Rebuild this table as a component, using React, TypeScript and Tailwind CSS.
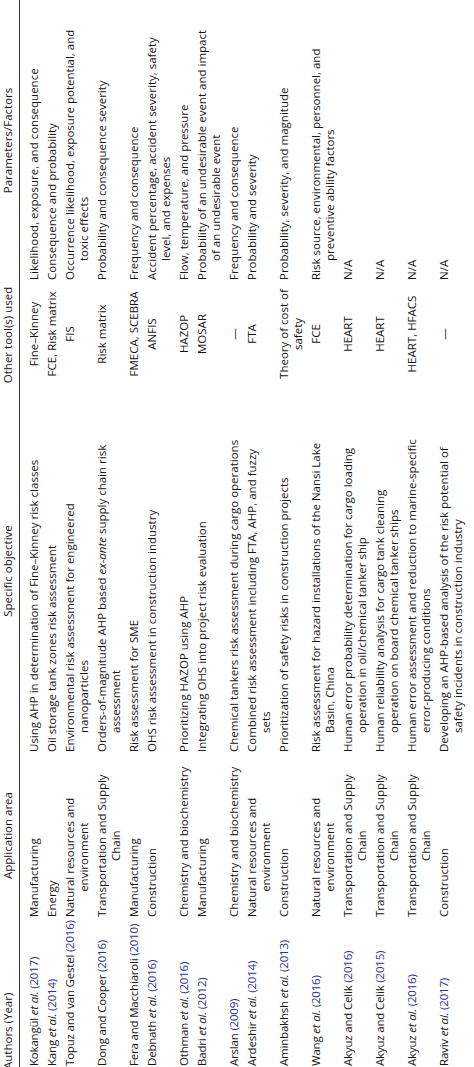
import type { ReactNode } from 'react';

const Yr = ({ y }: { y: string }) => <span className="text-[#28358f]">({y})</span>;
const Al = () => <i>et al.</i>;

type Row = {
  author: ReactNode;
  app: string[];
  obj: ReactNode[];
  tool: string[];
  par: string[];
};

const rows: Row[] = [
  { author: <>Kokangül <Al /> <Yr y="2017" /></>, app: ['Manufacturing'], obj: ['Using AHP in determination of Fine–Kinney risk classes'], tool: ['Fine–Kinney'], par: ['Likelihood, exposure, and consequence'] },
  { author: <>Kang <Al /> <Yr y="2014" /></>, app: ['Energy'], obj: ['Oil storage tank zones risk assessment'], tool: ['FCE, Risk matrix'], par: ['Consequence and probability'] },
  { author: <>Topuz and van Gestel <Yr y="2016" /></>, app: ['Natural resources and', 'environment'], obj: ['Environmental risk assessment for engineered', 'nanoparticles'], tool: ['FIS'], par: ['Occurrence likelihood, exposure potential, and', 'toxic effects'] },
  { author: <>Dong and Cooper <Yr y="2016" /></>, app: ['Transportation and Supply', 'Chain'], obj: [<>Orders-of-magnitude AHP based <i>ex-ante</i> supply chain risk</>, 'assessment'], tool: ['Risk matrix'], par: ['Probability and consequence severity'] },
  { author: <>Fera and Macchiaroli <Yr y="2010" /></>, app: ['Manufacturing'], obj: ['Risk assessment for SME'], tool: ['FMECA, SCEBRA'], par: ['Frequency and consequence'] },
  { author: <>Debnath <Al /> <Yr y="2016" /></>, app: ['Construction'], obj: ['OHS risk assessment in construction industry'], tool: ['ANFIS'], par: ['Accident percentage, accident severity, safety', 'level, and expenses'] },
  { author: <>Othman <Al /> <Yr y="2016" /></>, app: ['Chemistry and biochemistry'], obj: ['Prioritizing HAZOP using AHP'], tool: ['HAZOP'], par: ['Flow, temperature, and pressure'] },
  { author: <>Badri <Al /> <Yr y="2012" /></>, app: ['Manufacturing'], obj: ['Integrating OHS into project risk evaluation'], tool: ['MOSAR'], par: ['Probability of an undesirable event and impact', 'of an undesirable event'] },
  { author: <>Arslan <Yr y="2009" /></>, app: ['Chemistry and biochemistry'], obj: ['Chemical tankers risk assessment during cargo operations'], tool: ['—'], par: ['Frequency and consequence'] },
  { author: <>Ardeshir <Al /> <Yr y="2014" /></>, app: ['Natural resources and', 'environment'], obj: ['Combined risk assessment including FTA, AHP, and fuzzy', 'sets'], tool: ['FTA'], par: ['Probability and severity'] },
  { author: <>Aminbakhsh <Al /> <Yr y="2013" /></>, app: ['Construction'], obj: ['Prioritization of safety risks in construction projects'], tool: ['Theory of cost of', 'safety'], par: ['Probability, severity, and magnitude'] },
  { author: <>Wang <Al /> <Yr y="2016" /></>, app: ['Natural resources and', 'environment'], obj: ['Risk assessment for hazard installations of the Nansi Lake', 'Basin, China'], tool: ['FCE'], par: ['Risk source, environmental, personnel, and', 'preventive ability factors'] },
  { author: <>Akyuz and Celik <Yr y="2016" /></>, app: ['Transportation and Supply', 'Chain'], obj: ['Human error probability determination for cargo loading', 'operation in oil/chemical tanker ship'], tool: ['HEART'], par: ['N/A'] },
  { author: <>Akyuz and Celik <Yr y="2015" /></>, app: ['Transportation and Supply', 'Chain'], obj: ['Human reliability analysis for cargo tank cleaning', 'operation on board chemical tanker ships'], tool: ['HEART'], par: ['N/A'] },
  { author: <>Akyuz <Al /> <Yr y="2016" /></>, app: ['Transportation and Supply', 'Chain'], obj: ['Human error assessment and reduction to marine-specific', 'error-producing conditions'], tool: ['HEART, HFACS'], par: ['N/A'] },
  { author: <>Raviv <Al /> <Yr y="2017" /></>, app: ['Construction'], obj: ['Developing an AHP-based analysis of the risk potential of', 'safety incidents in construction industry'], tool: ['—'], par: ['N/A'] },
];

const cols = 'grid grid-cols-[149px_165px_364px_108px_1fr]';

function Hanging({ lines }: { lines: ReactNode[] }) {
  return (
    <div>
      {lines.map((l, i) => (
        <div key={i} className={i > 0 ? 'whitespace-nowrap pl-[19px]' : 'whitespace-nowrap'}>{l}</div>
      ))}
    </div>
  );
}

export default function App() {
  return (
    <div className="relative w-[474px] h-[1067px] overflow-hidden bg-white">
      {/* table is typeset sideways, as in the journal page */}
      <div
        className="absolute left-0 top-[1067px] w-[1067px] h-[474px] origin-top-left -rotate-90 text-[11.5px] leading-[14px] text-[#141414]"
        style={{ fontFamily: '"Open Sans", "Noto Sans", sans-serif' }}
      >
        <div className={`${cols} pt-[1px] h-[20px] border-b border-[#2a2f86]`}>
          <div className="whitespace-nowrap -ml-[2px]">Authors (Year)</div>
          <div className="text-center">Application area</div>
          <div className="text-center">Specific objective</div>
          <div className="text-center whitespace-nowrap">Other tool(s) used</div>
          <div className="text-center">Parameters/Factors</div>
        </div>
        <div className="pt-[5px] pl-[1px]">
          {rows.map((r, i) => (
            <div key={i} className={`${cols} py-[2px]`}>
              <div className="whitespace-nowrap tracking-[-0.2px]">{r.author}</div>
              <div>
                <div className="inline-block text-center">
                  {r.app.map((l, j) => (
                    <div key={j} className="whitespace-nowrap">{l}</div>
                  ))}
                </div>
              </div>
              <Hanging lines={r.obj} />
              <div className="text-center">
                {r.tool.map((l, j) => (
                  <div key={j} className="whitespace-nowrap">{l}</div>
                ))}
              </div>
              <Hanging lines={r.par} />
            </div>
          ))}
        </div>
      </div>
    </div>
  );
}
